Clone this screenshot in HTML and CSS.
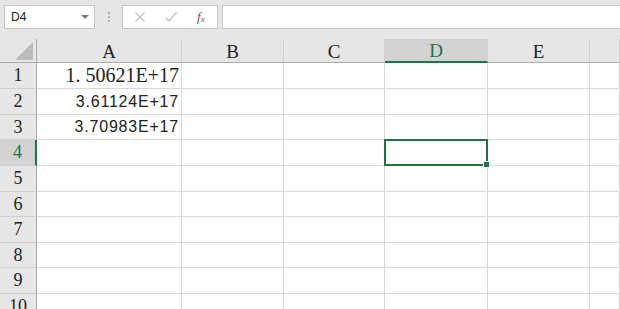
FILE: index.html
```html
<!DOCTYPE html>
<html lang="en">
<head>
    <meta charset="UTF-8">
    <title>Sheet</title>
    <link rel="stylesheet" href="styles.css">
</head>
<body>

    <!-- Formula Bar -->
    <div class="formula-bar">
        <div class="name-box">
            <span>D4</span>
            <span class="caret"></span>
        </div>
        <div class="bar-dots"><i></i><i></i><i></i></div>
        <div class="fx-box">
            <svg width="12" height="12" viewBox="0 0 12 12"><path d="M1.5 1.5 L10.5 10.5 M10.5 1.5 L1.5 10.5" stroke="#c4c4c4" stroke-width="1.3" fill="none"/></svg>
            <svg width="14" height="12" viewBox="0 0 14 12"><path d="M1.5 6.5 L5 10 L12.5 1.5" stroke="#c4c4c4" stroke-width="1.4" fill="none"/></svg>
            <span class="fx">f<sub>x</sub></span>
        </div>
        <div class="formula-input"></div>
    </div>

    <!-- Sheet Grid -->
    <div class="sheet" id="sheet"></div>

    <script>
        // Sheet data
        const cols = ["A", "B", "C", "D", "E", ""];
        const values = {
            1: '<span class="val-serif">1. 50621E+17</span>',
            2: '<span class="val">3.61124E+17</span>',
            3: '<span class="val">3.70983E+17</span>'
        };
        const sheet = document.getElementById("sheet");

        function cell(cls, html) {
            const div = document.createElement("div");
            div.className = cls;
            div.innerHTML = html || "";
            sheet.appendChild(div);
        }

        // Column header row
        cell("corner", '<span class="corner-tri"></span>');
        cols.forEach(c => cell(c === "D" ? "col-head active" : "col-head", c));

        // Body rows
        for (let r = 1; r <= 10; r++) {
            cell(r === 4 ? "row-head active" : "row-head", r);
            cols.forEach((c, i) => {
                let cls = "cell";
                if (c === "A") cls += " num";
                if (c === "D" && r === 4) cls += " selected";
                cell(cls, c === "A" ? values[r] : "");
            });
        }
    </script>

</body>
</html>
```

FILE: styles.css
```css
html, body {
    margin: 0;
    padding: 0;
    background: #e6e6e6;
    font-family: "Liberation Sans", Arial, sans-serif;
    overflow: hidden;
}

/* Formula bar */
.formula-bar {
    display: flex;
    align-items: flex-start;
    height: 34px;
    padding: 5px 0 0 4px;
    box-sizing: border-box;
}

.name-box {
    width: 91px;
    height: 24px;
    box-sizing: border-box;
    background: #fff;
    border: 1px solid #c6c6c6;
    display: flex;
    align-items: center;
    justify-content: space-between;
    padding: 0 5px 0 6px;
    font-size: 12px;
    color: #222;
}

.caret {
    width: 0;
    height: 0;
    border-left: 4px solid transparent;
    border-right: 4px solid transparent;
    border-top: 4px solid #777;
}

.bar-dots {
    width: 27px;
    height: 24px;
    display: flex;
    flex-direction: column;
    align-items: center;
    justify-content: center;
    gap: 2px;
}

.bar-dots i {
    display: block;
    width: 2px;
    height: 2px;
    background: #b0b0b0;
}

.fx-box {
    width: 96px;
    height: 24px;
    box-sizing: border-box;
    background: #fff;
    border: 1px solid #c6c6c6;
    display: flex;
    align-items: center;
    padding-left: 11px;
    gap: 18px;
}

.fx {
    font-family: "Liberation Serif", serif;
    font-style: italic;
    font-size: 13px;
    color: #555;
    margin-left: 1px;
}

.fx sub {
    font-size: 9px;
    vertical-align: -1px;
}

.formula-input {
    flex: 1;
    height: 24px;
    margin-left: 4px;
    box-sizing: border-box;
    background: #fff;
    border: 1px solid #c6c6c6;
    border-right: none;
}

/* Grid */
.sheet {
    margin-top: 5px;
    display: grid;
    grid-template-columns: 37px 145px 102px 101px 103px 102px 1fr;
    grid-template-rows: 24px 26px 26px 25px 26px 26px 25px 26px 25px 26px 26px;
    background: #fff;
}

.sheet > div {
    box-sizing: border-box;
}

.corner {
    background: #e6e6e6;
    border-right: 1px solid #ababab;
    border-bottom: 1px solid #ababab;
    position: relative;
}

.corner-tri {
    position: absolute;
    right: 3px;
    bottom: 2px;
    width: 0;
    height: 0;
    border-left: 18px solid transparent;
    border-bottom: 18px solid #bcbcbc;
}

.col-head, .row-head {
    background: #e6e6e6;
    font-family: "Liberation Serif", "DejaVu Serif", serif;
    font-size: 19px;
    color: #222;
    display: flex;
    align-items: center;
    justify-content: center;
}

.col-head {
    border-right: 1px solid #cfcfcf;
    border-bottom: 1px solid #ababab;
    padding-top: 2px;
}

.row-head {
    border-right: 1px solid #ababab;
    border-bottom: 1px solid #cfcfcf;
    font-size: 18px;
}

.col-head.active {
    background: #d2d2d2;
    color: #217346;
    border-bottom: 2px solid #217346;
}

.row-head.active {
    background: #d2d2d2;
    color: #217346;
    border-right: 2px solid #217346;
}

.cell {
    border-right: 1px solid #d9d9d9;
    border-bottom: 1px solid #d9d9d9;
    position: relative;
}

.cell.num {
    display: flex;
    align-items: flex-end;
    justify-content: flex-end;
    padding: 0 2px 3px 0;
    color: #222;
}

.val {
    font-size: 16px;
    letter-spacing: 0.8px;
}

.val-serif {
    font-family: "Liberation Serif", serif;
    font-size: 20px;
    letter-spacing: 0;
    margin-bottom: -2px;
}

/* Active cell */
.cell.selected::after {
    content: "";
    position: absolute;
    left: -1px;
    top: -1px;
    right: -1px;
    bottom: -1px;
    border: 2px solid #217346;
}

.cell.selected::before {
    content: "";
    position: absolute;
    right: -3px;
    bottom: -3px;
    width: 5px;
    height: 5px;
    background: #217346;
    border: 1px solid #fff;
    z-index: 1;
}
```
